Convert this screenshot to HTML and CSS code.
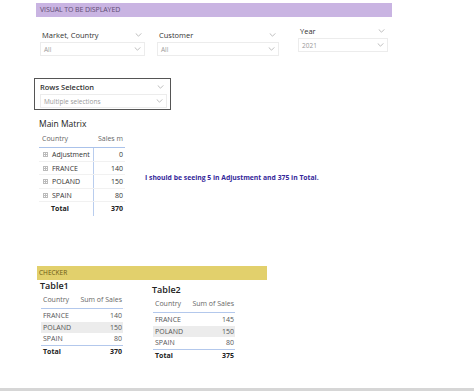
FILE: index.html
```html
<!DOCTYPE html>
<html lang="en">
<head>
  <meta charset="UTF-8" />
  <title>Report</title>
  <link rel="stylesheet" href="styles.css">
</head>
<body>
<div class="page">

  <div class="banner">VISUAL TO BE DISPLAYED</div>

  <div class="slicers">
    <div class="slicer s1">
      <div class="slicer-head"><span>Market, Country</span><svg class="chev" viewBox="0 0 8 5"><polyline points="0.5,0.5 4,4 7.5,0.5"/></svg></div>
      <div class="drop"><span>All</span><svg class="chev" viewBox="0 0 8 5"><polyline points="0.5,0.5 4,4 7.5,0.5"/></svg></div>
    </div>
    <div class="slicer s2">
      <div class="slicer-head"><span>Customer</span><svg class="chev" viewBox="0 0 8 5"><polyline points="0.5,0.5 4,4 7.5,0.5"/></svg></div>
      <div class="drop"><span>All</span><svg class="chev" viewBox="0 0 8 5"><polyline points="0.5,0.5 4,4 7.5,0.5"/></svg></div>
    </div>
    <div class="slicer s3">
      <div class="slicer-head"><span>Year</span><svg class="chev" viewBox="0 0 8 5"><polyline points="0.5,0.5 4,4 7.5,0.5"/></svg></div>
      <div class="drop"><span>2021</span><svg class="chev" viewBox="0 0 8 5"><polyline points="0.5,0.5 4,4 7.5,0.5"/></svg></div>
    </div>
  </div>

  <div class="rows-sel">
    <div class="slicer-head bold"><span>Rows Selection</span><svg class="chev" viewBox="0 0 8 5"><polyline points="0.5,0.5 4,4 7.5,0.5"/></svg></div>
    <div class="drop"><span>Multiple selections</span><svg class="chev" viewBox="0 0 8 5"><polyline points="0.5,0.5 4,4 7.5,0.5"/></svg></div>
  </div>

  <div class="main">
    <div class="matrix">
      <div class="title">Main Matrix</div>
      <div class="mrow mhead"><span class="c1">Country</span><span class="c2">Sales m</span></div>
      <div class="mrow"><span class="c1"><i class="exp"></i>Adjustment</span><span class="c2">0</span></div>
      <div class="mrow"><span class="c1"><i class="exp"></i>FRANCE</span><span class="c2">140</span></div>
      <div class="mrow"><span class="c1"><i class="exp"></i>POLAND</span><span class="c2">150</span></div>
      <div class="mrow"><span class="c1"><i class="exp"></i>SPAIN</span><span class="c2">80</span></div>
      <div class="mrow mtotal"><span class="c1">Total</span><span class="c2">370</span></div>
    </div>
    <div class="note">I should be seeing 5 in Adjustment and 375 in Total.</div>
  </div>

  <div class="checker">CHECKER</div>

  <div class="tables">
    <div class="tbl t1">
      <div class="title">Table1</div>
      <div class="trow thead"><span>Country</span><span>Sum of Sales</span></div>
      <div class="trow"><span>FRANCE</span><span>140</span></div>
      <div class="trow alt"><span>POLAND</span><span>150</span></div>
      <div class="trow"><span>SPAIN</span><span>80</span></div>
      <div class="trow ttotal"><span>Total</span><span>370</span></div>
    </div>
    <div class="tbl t2">
      <div class="title">Table2</div>
      <div class="trow thead"><span>Country</span><span>Sum of Sales</span></div>
      <div class="trow"><span>FRANCE</span><span>145</span></div>
      <div class="trow alt"><span>POLAND</span><span>150</span></div>
      <div class="trow"><span>SPAIN</span><span>80</span></div>
      <div class="trow ttotal"><span>Total</span><span>375</span></div>
    </div>
  </div>

  <div class="footer-bar"></div>
</div>
</body>
</html>
```

FILE: styles.css
```css
* {
  box-sizing: border-box;
}

body {
  margin: 0;
  background: #fff;
  font-family: "Open Sans", "Noto Sans", Arial, sans-serif;
  color: #333;
}

.page {
  width: 474px;
  height: 391px;
  overflow: hidden;
  display: flex;
  flex-direction: column;
}

.banner {
  margin: 3px 0 0 36px;
  width: 356px;
  height: 14px;
  padding-left: 4px;
  background: #c9b4e2;
  color: #5e4c72;
  font-size: 7px;
  line-height: 14px;
  letter-spacing: -0.1px;
}

/* slicers */
.slicers {
  display: flex;
  align-items: flex-start;
  margin-top: 6px;
}

.slicer {
  padding-top: 4px;
}

.s1 {
  margin-left: 40px;
  width: 105px;
}

.s2 {
  margin-left: 12px;
  width: 122px;
}

.s3 {
  margin-left: 19px;
  width: 90px;
  padding-top: 0;
}

.slicer-head {
  display: flex;
  justify-content: space-between;
  align-items: center;
  height: 15px;
  padding: 0 3px 0 2px;
  font-size: 7.5px;
  color: #333;
}

.slicer-head.bold {
  font-weight: 600;
}

.drop {
  display: flex;
  justify-content: space-between;
  align-items: center;
  height: 14px;
  padding: 0 3px;
  border: 1px solid #ececec;
  font-size: 6.5px;
  color: #999;
}

.chev {
  width: 7px;
  height: 4px;
  fill: none;
  stroke: #999;
  stroke-width: 0.8;
}

.rows-sel {
  margin: 22px 0 0 34px;
  width: 137px;
  height: 32px;
  padding: 0 3px 0 5px;
  border: 1px solid #555;
}

.rows-sel .slicer-head {
  padding-left: 0;
}

/* main matrix */
.main {
  display: flex;
  height: 149px;
  margin-top: 7px;
}

.matrix {
  margin-left: 39px;
  width: 86px;
}

.title {
  height: 14px;
  font-size: 8.5px;
  line-height: 14px;
  color: #222;
}

.mrow {
  display: flex;
  height: 13.6px;
  font-size: 7px;
  line-height: 13.6px;
  border-bottom: 1px solid #f1f1f1;
}

.mrow .c1 {
  width: 55px;
  padding-left: 3px;
  border-right: 1px solid #b9cdee;
  white-space: nowrap;
}

.mrow .c2 {
  flex: 1;
  text-align: right;
  padding-right: 2px;
}

.mhead {
  height: 17px;
  line-height: 16px;
  color: #666;
  border-bottom: 1.5px solid #aac2ea;
}

.mhead .c1 {
  border-right: none;
}

.mtotal {
  font-weight: 700;
  color: #222;
  border-bottom: none;
}

.mtotal .c1 {
  padding-left: 12px;
}

.exp {
  display: inline-block;
  width: 5px;
  height: 5px;
  margin: 0 4px 0 1px;
  border: 1px solid #bbb;
  vertical-align: 0;
  background: linear-gradient(#bbb, #bbb) center / 3px 1px no-repeat,
              linear-gradient(#bbb, #bbb) center / 1px 3px no-repeat;
}

.note {
  margin: 56px 0 0 20px;
  font-size: 6.8px;
  font-weight: 700;
  line-height: 10px;
  color: #35279a;
  white-space: nowrap;
}

/* checker */
.checker {
  margin-left: 37px;
  width: 230px;
  height: 14px;
  padding-left: 2px;
  background: #e2d06c;
  color: #6a5a14;
  font-size: 6.5px;
  line-height: 14px;
}

.tables {
  display: flex;
  align-items: flex-start;
}

.tbl {
  width: 82px;
}

.t1 {
  margin-left: 41px;
}

.t2 {
  margin: 4px 0 0 30px;
}

.tbl .title {
  height: 12px;
  font-size: 9px;
  line-height: 12px;
  font-weight: 600;
  margin-left: -1px;
}

.trow {
  display: flex;
  justify-content: space-between;
  height: 11.5px;
  padding: 0 1px 0 2px;
  font-size: 7px;
  line-height: 11.5px;
  color: #555;
}

.thead {
  height: 17px;
  line-height: 15px;
  color: #666;
  border-bottom: 1.5px solid #b3c8ec;
  margin-bottom: 1px;
}

.alt {
  background: #ececec;
}

.ttotal {
  border-top: 1.5px solid #b3c8ec;
  height: 12px;
  font-weight: 700;
  color: #222;
}

.footer-bar {
  margin-top: auto;
  height: 3px;
  background: #d6d6d6;
}
```
